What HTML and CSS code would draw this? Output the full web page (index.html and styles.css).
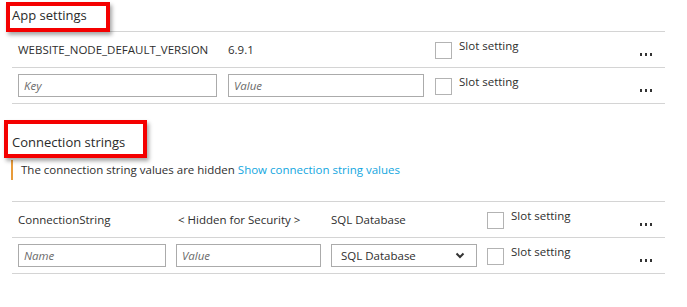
FILE: index.html
```html
<!DOCTYPE html>
<html lang="en">
<head>
  <meta charset="UTF-8">
  <title>Application settings</title>
  <link rel="stylesheet" href="styles.css">
</head>
<body>
  <div class="blade">

    <div class="section">
      <div class="section-title title-app">App settings</div>
      <div class="setting-list">
        <div class="setting-row app-row">
          <div class="cell">WEBSITE_NODE_DEFAULT_VERSION</div>
          <div class="cell">6.9.1</div>
          <label class="slot"><span class="check"></span><span class="slot-label">Slot setting</span></label>
          <div class="more"><i></i><i></i><i></i></div>
        </div>
        <div class="setting-row app-row">
          <input type="text" class="field" placeholder="Key">
          <input type="text" class="field" placeholder="Value">
          <label class="slot"><span class="check"></span><span class="slot-label">Slot setting</span></label>
          <div class="more"><i></i><i></i><i></i></div>
        </div>
      </div>
    </div>

    <div class="section">
      <div class="section-title title-conn">Connection strings</div>
      <div class="notice">The connection string values are hidden <a href="#" class="link">Show connection string values</a></div>
      <div class="setting-list conn-list">
        <div class="setting-row conn-row">
          <div class="cell">ConnectionString</div>
          <div class="cell hidden-value">&lt; Hidden for Security &gt;</div>
          <div class="cell">SQL Database</div>
          <label class="slot"><span class="check"></span><span class="slot-label">Slot setting</span></label>
          <div class="more"><i></i><i></i><i></i></div>
        </div>
        <div class="setting-row conn-row">
          <input type="text" class="field" placeholder="Name">
          <input type="text" class="field" placeholder="Value">
          <div class="select">
            <span>SQL Database</span>
            <svg class="chevron" width="10" height="7" viewBox="0 0 10 7"><polyline points="1.5,1.5 5,5 8.5,1.5" fill="none" stroke="#333" stroke-width="2"/></svg>
          </div>
          <label class="slot"><span class="check"></span><span class="slot-label">Slot setting</span></label>
          <div class="more"><i></i><i></i><i></i></div>
        </div>
      </div>
    </div>

  </div>
</body>
</html>
```

FILE: styles.css
```css
body {
  margin: 0;
  background: #fff;
  font-family: "Open Sans", "Noto Sans", sans-serif;
  font-size: 11.5px;
  color: #2e2e2e;
}

.blade {
  width: 653px;
  padding: 2px 0 0 12px;
}

/* red annotation box round each heading */
.section-title {
  position: relative;
  box-sizing: border-box;
  border: 4px solid #f40000;
  box-shadow: 2px 3px 4px rgba(0, 0, 0, 0.35);
  font-size: 13px;
  color: #2a2a2a;
}

.title-app {
  width: 104px;
  height: 30px;
  margin-left: -6px;
  margin-bottom: -1px;
  padding-left: 2px;
  line-height: 18px;
}

.title-conn {
  width: 143px;
  height: 38px;
  margin-left: -8px;
  margin-top: 16px;
  padding: 8px 0 0 4px;
  line-height: 20px;
}

.notice {
  margin: 2px 0 0 -1px;
  height: 20px;
  line-height: 20px;
  padding-left: 8px;
  border-left: 2px solid #e89b3a;
}

.link {
  color: #12a6e0;
  text-decoration: none;
}

.setting-list {
  border-top: 1px solid #d4d4d4;
}

.conn-list {
  margin-top: 21px;
}

.setting-row {
  display: grid;
  align-items: center;
  height: 35px;
  padding: 0 13px 0 6px;
  border-bottom: 1px solid #d4d4d4;
}

.app-row {
  grid-template-columns: 199px 196px 1fr auto;
  column-gap: 11px;
}

.conn-row {
  grid-template-columns: 148px 145px 146px 1fr auto;
  column-gap: 10px;
}

.cell {
  white-space: nowrap;
}

.hidden-value {
  padding-left: 2px;
}

.field {
  box-sizing: border-box;
  width: 100%;
  height: 23px;
  margin: 0;
  padding: 0 5px;
  border: 1px solid #ababab;
  border-radius: 0;
  font-family: inherit;
  font-size: 11.5px;
  color: #2e2e2e;
  outline: none;
}

.field::placeholder {
  color: #6a6a6a;
  font-style: italic;
}

.select {
  box-sizing: border-box;
  height: 23px;
  display: flex;
  align-items: center;
  justify-content: space-between;
  padding: 0 11px 0 9px;
  border: 1px solid #ababab;
}

.chevron {
  display: block;
}

.slot {
  display: flex;
  align-items: flex-start;
  gap: 7px;
}

.check {
  box-sizing: border-box;
  width: 17px;
  height: 17px;
  margin-top: 1px;
  border: 1px solid #b3b3b3;
  background: #fff;
}

.slot-label {
  line-height: 16px;
  margin-top: -3px;
}

.more {
  display: flex;
  gap: 3px;
  margin-top: 10px;
}

.more i {
  width: 2px;
  height: 3px;
  background: #333;
}
```
